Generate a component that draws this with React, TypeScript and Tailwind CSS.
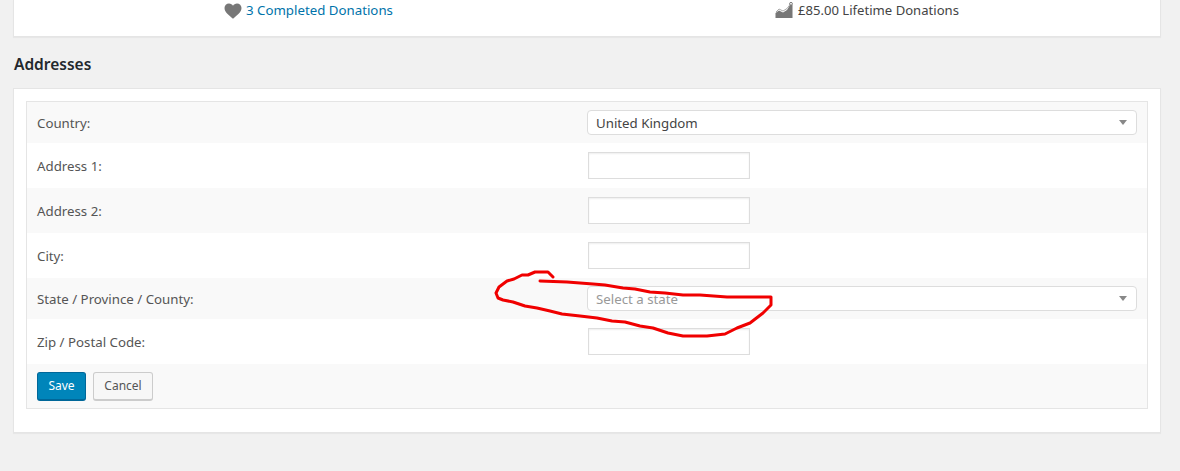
const font = "font-['Noto_Sans','Open_Sans',sans-serif]";

function Arrow() {
  return <span className="absolute right-[9px] top-[9px] w-0 h-0 border-x-[4px] border-x-transparent border-t-[5px] border-t-[#888]" />;
}

function Select({ value, placeholder }: { value: string; placeholder?: boolean }) {
  return (
    <div className={`relative w-[550px] h-[25px] bg-white border border-[#ddd] rounded-[4px] pl-[8px] text-[13.27px] leading-[25px] ${placeholder ? "text-[#999]" : "text-[#444]"}`}>
      {value}
      <Arrow />
    </div>
  );
}

function Input() {
  return <div className="ml-[1px] w-[162px] h-[27px] bg-white border border-[#ddd] shadow-[inset_0_1px_2px_rgba(0,0,0,0.07)]" />;
}

function Row({ label, alt, h, children }: { label: string; alt?: boolean; h: string; children: React.ReactNode }) {
  return (
    <div className={`flex items-center ${h} ${alt ? "bg-[#f9f9f9]" : "bg-white"}`}>
      <div className="w-[560px] pl-[10px] pt-[2px] text-[13.27px] text-[#555]">{label}</div>
      {children}
    </div>
  );
}

export default function App() {
  return (
    <div className={`relative w-[1180px] h-[471px] overflow-hidden bg-[#f1f1f1] ${font}`}>
      <div className="ml-[13px] w-[1148px] h-[37px] bg-white border border-[#e5e5e5] border-t-0 shadow-[0_1px_1px_rgba(0,0,0,0.04)] flex">
        <div className="w-[573px] pl-[211px] pt-[1px] h-[20px] flex items-center gap-[4px] text-[#0073aa] text-[13.27px]">
          <svg width="18" height="16" viewBox="0 0 18 16" className="shrink-0 -ml-[1px]">
            <path d="M9 15.8 C6 13 0.5 9.5 0.5 5 C0.5 2.5 2.5 0.6 5 0.6 C6.8 0.6 8.2 1.6 9 2.8 C9.8 1.6 11.2 0.6 13 0.6 C15.5 0.6 17.5 2.5 17.5 5 C17.5 9.5 12 13 9 15.8 Z" fill="#777" />
          </svg>
          <span>3 Completed Donations</span>
        </div>
        <div className="pl-[188px] pt-[1px] h-[20px] flex items-center gap-[5px] text-[#444] text-[13.1px]">
          <svg width="18" height="17" viewBox="0 0 18 17" className="shrink-0">
            <path d="M0.5 16 L0.5 11 L4 8.5 L8 10.5 L12 8 L15 3 L17.5 3 L17.5 16 Z" fill="#777" />
            <path d="M1 10 L4 7 L8 9 L12 6.5 L15.5 2" fill="none" stroke="#aaa" strokeWidth="1" />
            <circle cx="16" cy="1.8" r="1.4" fill="#fff" stroke="#777" />
          </svg>
          <span>£85.00 Lifetime Donations</span>
        </div>
      </div>

      <h2 className="ml-[14px] mt-[16px] h-[22px] text-[15.5px] leading-[22px] font-semibold text-[#23282d]">Addresses</h2>

      <div className="ml-[13px] mt-[13px] w-[1148px] h-[345px] bg-white border border-[#e5e5e5] shadow-[0_1px_1px_rgba(0,0,0,0.04)] pt-[12px] px-[12px]">
        <div className="border border-[#e5e5e5] w-[1122px]">
          <Row label="Country:" alt h="h-[41px]">
            <Select value="United Kingdom" />
          </Row>
          <Row label="Address 1:" h="h-[45px]"><Input /></Row>
          <Row label="Address 2:" alt h="h-[45px]"><Input /></Row>
          <Row label="City:" h="h-[45px]"><Input /></Row>
          <Row label="State / Province / County:" alt h="h-[41px]">
            <Select value="Select a state" placeholder />
          </Row>
          <Row label="Zip / Postal Code:" h="h-[45px]"><Input /></Row>
          <div className="h-[44px] bg-[#f9f9f9] pl-[10px] pt-[8px] flex gap-[7px] text-[12px]">
            <button className="w-[49px] h-[29px] rounded-[3px] bg-[#0085ba] border border-[#006799] border-b-[2px] text-white">Save</button>
            <button className="w-[60px] h-[29px] rounded-[3px] bg-[#f7f7f7] border border-[#ccc] border-b-[2px] text-[#555]">Cancel</button>
          </div>
        </div>
      </div>

      <svg className="absolute left-0 top-0 pointer-events-none" width="1180" height="471" viewBox="0 0 1180 471">
        <path
          d="M553 277 L550 274 L548 272 L535 272 L528 275 L522 275 L514 279 L507 281 L499 287 L496 293 L498 298 L503 300 L513 302 L525 306 L537 308 L550 311 L562 314 L580 316 L597 318 L612 321 L625 322 L640 326 L653 328 L668 333 L683 336 L707 336 L725 334 L737 328 L750 323 L763 313 L771 305 L771 297 L727 297 L700 295 L683 295 L665 293 L650 292 L635 289 L623 288 L605 285 L593 284 L567 282 L540 281"
          fill="none"
          stroke="#f00000"
          strokeWidth="3"
          strokeLinejoin="round"
          strokeLinecap="round"
        />
      </svg>
    </div>
  );
}
